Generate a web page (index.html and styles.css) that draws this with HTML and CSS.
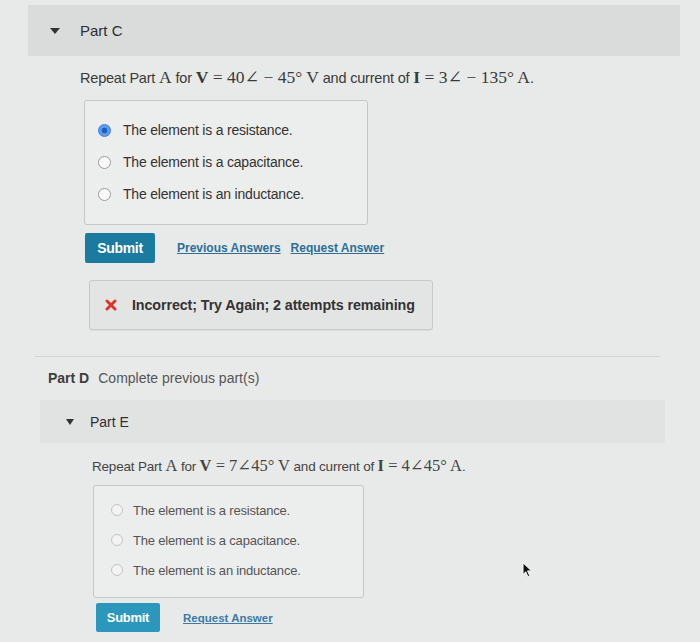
FILE: index.html
```html
<!DOCTYPE html>
<html lang="en">
<head>
<meta charset="utf-8">
<title>Parts C–E</title>
<link rel="stylesheet" href="styles.css">
</head>
<body>
<div class="page">
  <div class="part-head head-c"><span class="caret"></span><span class="part-title">Part C</span></div>
  <div class="body-c">
    <p class="q">Repeat Part <span class="m">A</span> for <span class="m"><b>V</b> = 40∠ − 45° V</span> and current of <span class="m"><b>I</b> = 3∠ − 135° A</span>.</p>
    <div class="opts opts-c">
      <div class="opt"><span class="radio on"></span><span>The element is a resistance.</span></div>
      <div class="opt"><span class="radio"></span><span>The element is a capacitance.</span></div>
      <div class="opt"><span class="radio"></span><span>The element is an inductance.</span></div>
    </div>
    <div class="actions actions-c">
      <button class="submit">Submit</button>
      <a class="link" href="#">Previous Answers</a>
      <a class="link" href="#">Request Answer</a>
    </div>
    <div class="feedback">
      <svg class="x-icon" viewBox="0 0 12 12" width="12" height="12"><path d="M2 2 L10 10 M10 2 L2 10" stroke="#d9372b" stroke-width="3" stroke-linecap="round"/></svg>
      <span>Incorrect; Try Again; 2 attempts remaining</span>
    </div>
  </div>
  <div class="divider"></div>
  <div class="part-d"><b>Part D</b><span class="pd-note">Complete previous part(s)</span></div>
  <div class="part-head head-e"><span class="caret"></span><span class="part-title">Part E</span></div>
  <div class="body-e">
    <p class="q q-e">Repeat Part <span class="m">A</span> for <span class="m"><b>V</b> = 7∠45° V</span> and current of <span class="m"><b>I</b> = 4∠45° A</span>.</p>
    <div class="opts opts-e">
      <div class="opt"><span class="radio dis"></span><span>The element is a resistance.</span></div>
      <div class="opt"><span class="radio dis"></span><span>The element is a capacitance.</span></div>
      <div class="opt"><span class="radio dis"></span><span>The element is an inductance.</span></div>
    </div>
    <div class="actions actions-e">
      <button class="submit submit-e">Submit</button>
      <a class="link" href="#">Request Answer</a>
    </div>
  </div>
  <svg class="cursor" viewBox="0 0 12 18" width="11" height="16"><path d="M1 1 L1 14 L4 11 L6.5 16.5 L8.5 15.5 L6 10 L10.5 10 Z" fill="#111" stroke="#fff" stroke-width="1"/></svg>
</div>
</body>
</html>
```

FILE: styles.css
```css
html, body {
  margin: 0;
  padding: 0;
}
body {
  background: #e8eae9;
  font-family: "Liberation Sans", Arial, sans-serif;
  color: #333;
  width: 700px;
  height: 642px;
  overflow: hidden;
}
.page {
  position: relative;
  padding-top: 5px;
}
.part-head {
  display: flex;
  align-items: center;
  box-sizing: border-box;
}
.head-c {
  margin-left: 28px;
  width: 652px;
  height: 51px;
  background: #d9dcdb;
  padding-left: 22px;
}
.caret {
  width: 0;
  height: 0;
  border-left: 5px solid transparent;
  border-right: 5px solid transparent;
  border-top: 6px solid #333;
  margin-right: 20px;
}
.part-title {
  font-size: 15px;
  color: #2e2e2e;
}
.body-c {
  padding-left: 80px;
}
.q {
  margin: 12px 0 0;
  height: 20px;
  font-size: 14.5px;
  line-height: 20px;
  color: #3a3a3a;
  letter-spacing: -0.2px;
}
.m {
  font-family: "Liberation Serif", "DejaVu Serif", serif;
  font-size: 17.5px;
  line-height: 1;
  letter-spacing: 0;
}
.m b {
  font-weight: bold;
}
.opts {
  box-sizing: border-box;
  border: 1px solid #c6c8c7;
  border-radius: 3px;
  background: #eceeed;
}
.opts-c {
  margin: 12px 0 0 4px;
  width: 284px;
  height: 125px;
  padding: 13px 0 0 13px;
}
.opt {
  display: flex;
  align-items: center;
  height: 32px;
  font-size: 14px;
  color: #333;
  letter-spacing: -0.2px;
}
.radio {
  box-sizing: border-box;
  width: 13px;
  height: 13px;
  border-radius: 50%;
  border: 1px solid #9a9a9a;
  background: #fafafa;
  margin-right: 12px;
  flex: none;
}
.radio.on {
  border: 1px solid #3a7fd8;
  background: radial-gradient(circle, #1d5fc8 0 2.6px, #5d9cea 3.2px);
}
.actions {
  display: flex;
  align-items: center;
}
.actions-c {
  margin: 8px 0 0 5px;
}
.submit {
  font-family: "Liberation Sans", Arial, sans-serif;
  font-weight: bold;
  font-size: 14px;
  color: #fff;
  background: #1b7aa0;
  border: none;
  border-radius: 2px;
  width: 70px;
  height: 30px;
  padding: 0;
  letter-spacing: -0.3px;
  margin-right: 22px;
}
.link {
  font-size: 12px;
  font-weight: bold;
  color: #2b6f98;
  text-decoration: underline;
  margin-right: 10px;
}
.feedback {
  box-sizing: border-box;
  margin: 17px 0 0 9px;
  width: 344px;
  height: 50px;
  border: 1px solid #c8cac9;
  border-radius: 3px;
  background: #e3e5e4;
  box-shadow: 0 1px 1px rgba(0, 0, 0, 0.06);
  display: flex;
  align-items: center;
  padding-left: 15px;
  font-weight: bold;
  font-size: 14.3px;
  color: #333;
  letter-spacing: -0.1px;
}
.x-icon {
  margin-right: 15px;
  flex: none;
}
.divider {
  margin: 26px 0 0 35px;
  width: 625px;
  height: 1px;
  background: #d3d5d4;
}
.part-d {
  margin: 11px 0 0 48px;
  line-height: 20px;
  font-size: 14px;
  color: #444;
}
.part-d b {
  color: #3d3d3d;
}
.pd-note {
  margin-left: 9px;
  color: #555;
}
.head-e {
  margin: 12px 0 0 40px;
  width: 625px;
  height: 43px;
  background: #e1e3e2;
  padding-left: 26px;
}
.head-e .caret {
  margin-right: 16px;
  border-left-width: 4.5px;
  border-right-width: 4.5px;
}
.head-e .part-title {
  font-size: 14px;
}
.body-e {
  padding-left: 92px;
}
.q-e {
  margin-top: 14px;
  font-size: 13.5px;
  color: #444;
}
.q-e .m {
  font-size: 16.5px;
}
.opts-e {
  margin: 8px 0 0 1px;
  width: 271px;
  height: 113px;
  padding: 9px 0 0 17px;
}
.opts-e .opt {
  height: 30px;
  font-size: 13px;
  color: #555;
}
.radio.dis {
  width: 12px;
  height: 12px;
  border-color: #c4c4c4;
  background: #f3f3f3;
  margin-right: 10px;
}
.actions-e {
  margin: 5px 0 0 4px;
}
.submit-e {
  width: 64px;
  height: 29px;
  background: #2b97bc;
  font-size: 13px;
  margin-right: 23px;
}
.actions-e .link {
  font-size: 11.5px;
  color: #3b7aa6;
}
.cursor {
  position: absolute;
  left: 522px;
  top: 562px;
}
```
